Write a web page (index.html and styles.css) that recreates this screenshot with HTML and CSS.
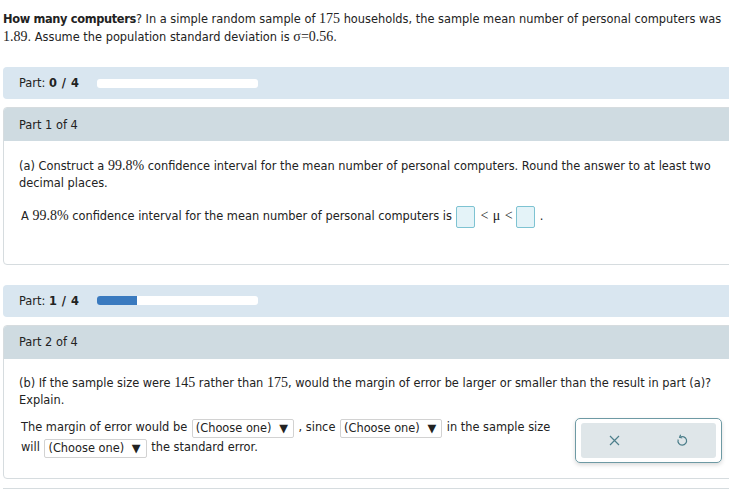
FILE: index.html
```html
<!DOCTYPE html>
<html>
<head>
<meta charset="utf-8">
<link rel="stylesheet" href="styles.css">
</head>
<body>
<div class="page">
  <p class="question"><b>How many computers</b>? In a simple random sample of <span class="m">175</span> households, the sample mean number of personal computers was <span class="m">1.89</span>. Assume the population standard deviation is <span class="m">σ=0.56</span>.</p>

  <div class="progress">
    <span class="plabel">Part: <b>0 / 4</b></span>
    <div class="bar"><div class="fill" style="width:0%"></div></div>
  </div>
  <div class="part">
    <div class="part-head">Part 1 of 4</div>
    <div class="part-body">
      <p class="prompt">(a) Construct a <span class="m">99.8%</span> confidence interval for the mean number of personal computers. Round the answer to at least two decimal places.</p>
      <p class="answer">A <span class="m">99.8%</span> confidence interval for the mean number of personal computers is <span class="box"></span><span class="m lt">&lt; μ &lt;</span><span class="box"></span>.</p>
    </div>
  </div>

  <div class="progress second">
    <span class="plabel">Part: <b>1 / 4</b></span>
    <div class="bar"><div class="fill" style="width:25%"></div></div>
  </div>
  <div class="part">
    <div class="part-head">Part 2 of 4</div>
    <div class="part-body body-b">
      <p class="prompt">(b) If the sample size were <span class="m">145</span> rather than <span class="m">175</span>, would the margin of error be larger or smaller than the result in part (a)? Explain.</p>
      <div class="row">
        <p class="answer2">The margin of error would be <span class="sel">(Choose one) <i>▼</i></span> , since <span class="sel">(Choose one) <i>▼</i></span> in the sample size will <span class="sel">(Choose one) <i>▼</i></span> the standard error.</p>
        <div class="tools">
          <div class="tools-inner">
            <svg width="11" height="11" viewBox="0 0 11 11"><path d="M1 1L10 10M10 1L1 10" stroke="#4d7f8b" stroke-width="1.2" fill="none"/></svg>
            <svg width="12" height="13" viewBox="0 0 12 13"><path d="M4 3.2A4.3 4.3 0 1 1 2.2 5.5" stroke="#4d7f8b" stroke-width="1.2" fill="none"/><path d="M4.6 0.8L3.6 3.4L6.3 4" stroke="#4d7f8b" stroke-width="1.2" fill="none"/></svg>
          </div>
        </div>
      </div>
    </div>
  </div>
  <div class="next"></div>
</div>
</body>
</html>
```

FILE: styles.css
```css
html, body { margin: 0; padding: 0; overflow: hidden; background: #fff; }
body { font-family: "DejaVu Sans", Verdana, sans-serif; font-size: 11.4px; color: #222; }
.page { width: 760px; padding: 10px 0 0 3px; }
p { margin: 0; }
.m { font-family: "Liberation Serif", "Times New Roman", "DejaVu Serif", serif; font-size: 14px; line-height: 1; }
.question { width: 724px; line-height: 18px; }
.question b { font-weight: bold; letter-spacing: -0.35px; }
.progress {
  margin-top: 21px; height: 32px; background: #d9e6f0; border-radius: 4px;
  display: flex; align-items: center; padding-left: 16px;
}
.progress.second { margin-top: 20px; }
.plabel { width: 62px; }
.progress b { font-weight: bold; word-spacing: 1px; }
.bar { margin-left: 16px; width: 161px; height: 9px; background: #fff; border-radius: 3px; overflow: hidden; }
.fill { height: 100%; background: #3a7abf; }
.part { margin-top: 8px; border: 1px solid #d6dcdf; border-radius: 4px; overflow: hidden; }
.part-head { height: 33px; background: #cfdbe1; padding-left: 15px; display: flex; align-items: center; }
.part-body { padding: 17px 16px 36px 15px; }
.prompt { line-height: 17px; max-width: 712px; }
.answer { margin-top: 13px; padding-left: 2px; line-height: 22px; }
.box {
  display: inline-block; width: 17px; height: 20px; border: 1px solid #7ec3d2; border-radius: 2px;
  background: #e4f3f8; margin: 0 5px 0 1px; vertical-align: middle;
}
.lt { margin: 0 2px 0 0; word-spacing: 1px; }
.body-b { padding-top: 16px; padding-bottom: 15px; }
.row { display: flex; margin-top: 9px; }
.answer2 { width: 530px; flex: none; padding-left: 2px; line-height: 19px; }
.sel {
  display: inline-block; border: 1px solid #d2d2d2; border-radius: 2px; padding: 0 5px 0 3px;
  line-height: 17px; vertical-align: -1px; margin: 0 1px;
}
.sel i { font-style: normal; margin-left: 4px; }
.tools {
  flex: none; margin-left: 24px; margin-top: 0; width: 135px; height: 35px; padding: 4px 5px;
  border: 1px solid #6e9aa4; border-radius: 5px; box-shadow: 0 2px 4px rgba(0,0,0,0.15);
}
.tools-inner {
  height: 100%; background: #dfe6e9; border-radius: 3px;
  display: flex; align-items: center; justify-content: space-around;
}
.next { margin-top: 9px; border-top: 1px solid #d6dcdf; }
```
